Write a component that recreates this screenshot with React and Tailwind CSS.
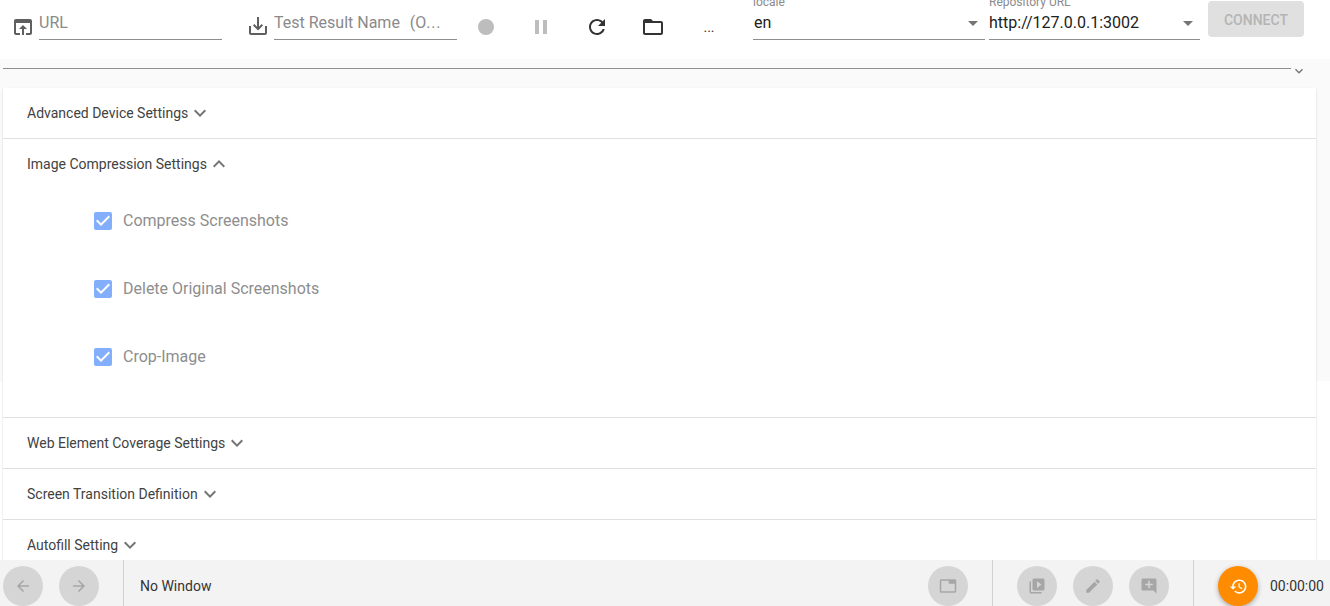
const P = {
  open: "M19 4H5c-1.11 0-2 .9-2 2v12c0 1.1.89 2 2 2h4v-2H5V8h14v10h-4v2h4c1.1 0 2-.9 2-2V6c0-1.1-.89-2-2-2zm-7 6l-4 4h3v6h2v-6h3l-4-4z",
  save: "M19 12v7H5v-7H3v7c0 1.1.9 2 2 2h14c1.1 0 2-.9 2-2v-7h-2zm-6 .67l2.59-2.58L17 11.5l-5 5-5-5 1.41-1.41L11 12.67V3h2z",
  pause: "M6 19h4V5H6v14zm8-14v14h4V5h-4z",
  refresh: "M17.65 6.35C16.2 4.9 14.21 4 12 4c-4.42 0-7.99 3.58-7.99 8s3.57 8 7.99 8c3.73 0 6.84-2.55 7.73-6h-2.08c-.82 2.33-3.04 4-5.65 4-3.31 0-6-2.69-6-6s2.69-6 6-6c1.66 0 3.14.69 4.22 1.78L13 11h7V4l-2.35 2.35z",
  folder: "M20 6h-8l-2-2H4c-1.1 0-1.99.9-1.99 2L2 18c0 1.1.9 2 2 2h16c1.1 0 2-.9 2-2V8c0-1.1-.9-2-2-2zm0 12H4V8h16v10z",
  more: "M16.59 8.59L12 13.17 7.41 8.59 6 10l6 6 6-6z",
  less: "M12 8l-6 6 1.41 1.41L12 10.83l4.59 4.58L18 14z",
  check: "M19 3H5c-1.11 0-2 .9-2 2v14c0 1.1.89 2 2 2h14c1.11 0 2-.9 2-2V5c0-1.1-.89-2-2-2zm-9 14l-5-5 1.41-1.41L10 14.17l7.59-7.59L19 8l-9 9z",
  back: "M20 11H7.83l5.59-5.59L12 4l-8 8 8 8 1.41-1.41L7.83 13H20v-2z",
  forward: "M12 4l-1.41 1.41L16.17 11H4v2h12.17l-5.58 5.59L12 20l8-8z",
  tab: "M21 3H3c-1.1 0-2 .9-2 2v14c0 1.1.9 2 2 2h18c1.1 0 2-.9 2-2V5c0-1.1-.9-2-2-2zm0 16H3V5h10v4h8v10z",
  video: "M4 6H2v14c0 1.1.9 2 2 2h14v-2H4V6zm16-4H8c-1.1 0-2 .9-2 2v12c0 1.1.9 2 2 2h12c1.1 0 2-.9 2-2V4c0-1.1-.9-2-2-2zm-8 12.5v-9l6 4.5-6 4.5z",
  edit: "M3 17.25V21h3.75L17.81 9.94l-3.75-3.75L3 17.25zM20.71 7.04c.39-.39.39-1.02 0-1.41l-2.34-2.34c-.39-.39-1.02-.39-1.41 0l-1.83 1.83 3.75 3.75 1.83-1.83z",
  comment: "M21.99 4c0-1.1-.89-2-1.99-2H4c-1.1 0-2 .9-2 2v12c0 1.1.9 2 2 2h14l4 4-.01-18zM17 11h-4v4h-2v-4H7V9h4V5h2v4h4v2z",
  history: "M13 3c-4.97 0-9 4.03-9 9H1l3.89 3.89.07.14L9 12H6c0-3.87 3.13-7 7-7s7 3.13 7 7-3.13 7-7 7c-1.93 0-3.68-.79-4.94-2.06l-1.42 1.42C8.27 19.99 10.51 21 13 21c4.97 0 9-4.03 9-9s-4.03-9-9-9zm-1 5v5l4.28 2.54.72-1.21-3.5-2.08V8H12z",
};

function Icon({ d, className }) {
  return (
    <svg viewBox="0 0 24 24" className={className} fill="currentColor" aria-hidden="true">
      <path d={d} />
    </svg>
  );
}

function TextInput({ children }) {
  return (
    <div className="w-[183px] h-[40px] border-b border-[#8e8e8e] text-[16px] leading-[46px] text-[#8a8a8a] whitespace-pre overflow-hidden">
      {children}
    </div>
  );
}

function SelectBox({ label, value, className, valueClass }) {
  return (
    <div className={`relative h-[40px] border-b border-[#8e8e8e] ${className}`}>
      <div className="absolute left-0 -top-[4px] text-[12px] leading-[12px] text-[#8a8a8a]">{label}</div>
      <div className={`pt-[13px] text-[16px] leading-[19px] text-[#212121] ${valueClass}`}>{value}</div>
      <div className="absolute right-[7px] top-[21px] w-0 h-0 border-x-[5px] border-x-transparent border-t-[5px] border-t-[#757575]" />
    </div>
  );
}

function PanelRow({ title, open }) {
  return (
    <div className="h-[50px] px-6 flex items-center text-[14px] text-[#424242]">
      <span>{title}</span>
      <Icon d={open ? P.less : P.more} className="w-6 h-6 text-[#757575] -mt-[1px]" />
    </div>
  );
}

function Check({ label }) {
  return (
    <div className="h-[68px] pb-[4px] flex items-center pl-[88px] gap-[8px] text-[16px] text-[#8e8e8e]">
      <Icon d={P.check} className="w-6 h-6 text-[#82aefc]" />
      <span>{label}</span>
    </div>
  );
}

function Round({ d }) {
  return (
    <div className="w-10 h-10 rounded-full bg-[#d5d5d5] flex items-center justify-center shrink-0">
      <Icon d={d} className="w-[18px] h-[18px] text-[#a6a6a6]" />
    </div>
  );
}

export default function App() {
  return (
    <div className="w-[1330px] h-[606px] overflow-hidden flex flex-col bg-white font-['Roboto',sans-serif]">
      <header className="h-[59px] shrink-0 bg-white flex items-start">
        <Icon d={P.open} className="w-6 h-6 text-[#5f5f5f] ml-[11px] mt-[15px]" />
        <div className="ml-[4px]"><TextInput>URL</TextInput></div>
        <Icon d={P.save} className="w-6 h-6 text-[#5f5f5f] ml-[24px] mt-[14px]" />
        <div className="ml-[4px]">
          <TextInput>Test Result Name  <span className="ml-[2px]">(O<span className="tracking-[0.8px]">...</span></span></TextInput>
        </div>
        <Icon d="M12 4a8 8 0 1 0 0 16a8 8 0 0 0 0-16z" className="w-6 h-6 text-[#bdbdbd] ml-[16.5px] mt-[15px]" />
        <Icon d={P.pause} className="w-6 h-6 text-[#bdbdbd] ml-[31.5px] mt-[15px]" />
        <Icon d={P.refresh} className="w-6 h-6 text-[#333333] ml-[32px] mt-[15px]" />
        <Icon d={P.folder} className="w-6 h-6 text-[#333333] ml-[32px] mt-[15px]" />
        <div className="w-6 ml-[32px] mt-[19px] text-center text-[14px] leading-[16px] text-[#333333]">...</div>
        <SelectBox label="locale" value="en" className="w-[232px] ml-[32px]" valueClass="pl-[1px]" />
        <SelectBox label="Repository URL" value="http://127.0.0.1:3002" className="w-[211px] ml-[4px]" valueClass="pl-0" />
        <div className="w-[96px] h-[36px] mt-[1px] ml-[8px] pt-[2px] rounded-[4px] bg-[#e0e0e0] flex items-center justify-center text-[14px] font-medium text-[#b4b4b4]">CONNECT</div>
      </header>

      <main className="relative flex-1 min-h-0 overflow-hidden">
        <div className="h-[322px] bg-[#fafafa]">
          <div className="h-[29px] relative">
            <div className="ml-[3px] mr-[39px] pt-[9px]"><div className="border-t border-[#8e8e8e]" /></div>
            <Icon d={P.more} className="absolute left-[1291px] top-[4px] w-4 h-4 text-[#757575]" />
          </div>
        </div>
        <section className="absolute left-[3px] top-[29px] w-[1313px] bg-white shadow-[0_1px_2px_rgba(0,0,0,0.16)]">
          <PanelRow title="Advanced Device Settings" />
          <div className="border-t border-[#e0e0e0]">
            <PanelRow title="Image Compression Settings" open />
            <div className="h-[228px]">
              <Check label="Compress Screenshots" />
              <Check label="Delete Original Screenshots" />
              <Check label="Crop-Image" />
            </div>
          </div>
          <div className="border-t border-[#e0e0e0]"><PanelRow title="Web Element Coverage Settings" /></div>
          <div className="border-t border-[#e0e0e0]"><PanelRow title="Screen Transition Definition" /></div>
          <div className="border-t border-[#e0e0e0]"><PanelRow title="Autofill Setting" /></div>
        </section>
      </main>

      <footer className="relative z-10 h-[46px] shrink-0 bg-[#f3f3f3] flex items-stretch">
        <div className="pl-[3px] pt-[6px] flex gap-4 w-[124px] border-r border-[#d0d0d0]">
          <Round d={P.back} />
          <Round d={P.forward} />
        </div>
        <div className="pl-4 pt-[6px] flex-1 flex items-center text-[14px] text-[#333333]">No Window</div>
        <div className="flex pt-[6px] pr-6 border-r border-[#d0d0d0]">
          <Round d={P.tab} />
        </div>
        <div className="flex pt-[6px] gap-4 px-6 border-r border-[#d0d0d0]">
          <Round d={P.video} />
          <Round d={P.edit} />
          <Round d={P.comment} />
        </div>
        <div className="flex items-center pt-[6px] pl-6 w-[136px]">
          <div className="w-10 h-10 rounded-full bg-[#ff8c00] flex items-center justify-center shadow-[0_2px_5px_rgba(0,0,0,0.3)] shrink-0">
            <Icon d={P.history} className="w-[19px] h-[19px] text-white" />
          </div>
          <span className="ml-3 text-[14px] text-[#333333]">00:00:00</span>
        </div>
      </footer>
    </div>
  );
}
